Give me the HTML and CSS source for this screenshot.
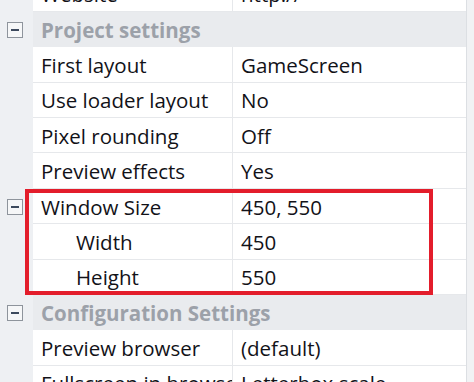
FILE: index.html
```html
<!DOCTYPE html>
<html>

<head>
  <meta charset="utf-8">
  <title>Project properties</title>
  <link rel="stylesheet" href="styles.css">
</head>

<body>
  <div id="panel">
    <div class="grid">

      <div class="row">
        <div class="gutter"></div>
        <div class="name">Website</div>
        <div class="value">http://</div>
      </div>

      <div class="row section">
        <div class="gutter"><span class="toggle"></span></div>
        <div class="title">Project settings</div>
      </div>
      <div class="row">
        <div class="gutter"></div>
        <div class="name">First layout</div>
        <div class="value">GameScreen</div>
      </div>
      <div class="row">
        <div class="gutter"></div>
        <div class="name">Use loader layout</div>
        <div class="value">No</div>
      </div>
      <div class="row">
        <div class="gutter"></div>
        <div class="name">Pixel rounding</div>
        <div class="value">Off</div>
      </div>
      <div class="row">
        <div class="gutter"></div>
        <div class="name">Preview effects</div>
        <div class="value">Yes</div>
      </div>

      <div class="highlight">
        <div class="row">
          <div class="gutter"><span class="toggle"></span></div>
          <div class="name">Window Size</div>
          <div class="value">450, 550</div>
        </div>
        <div class="row">
          <div class="gutter"></div>
          <div class="name sub">Width</div>
          <div class="value">450</div>
        </div>
        <div class="row">
          <div class="gutter"></div>
          <div class="name sub">Height</div>
          <div class="value">550</div>
        </div>
      </div>

      <div class="row section">
        <div class="gutter"><span class="toggle"></span></div>
        <div class="title">Configuration Settings</div>
      </div>
      <div class="row">
        <div class="gutter"></div>
        <div class="name">Preview browser</div>
        <div class="value">(default)</div>
      </div>
      <div class="row">
        <div class="gutter"></div>
        <div class="name">Fullscreen in browser</div>
        <div class="value">Letterbox scale</div>
      </div>

    </div>
    <div class="scrollbar"></div>
  </div>
</body>

</html>
```

FILE: styles.css
```css
body {
  margin: 0;
  font-family: 'Open Sans', 'Noto Sans', sans-serif;
  font-size: 20.5px;
  color: #121218;
  background-color: #eef0f3;
  overflow: hidden;
}

#panel {
  display: flex;
  height: 382px;
}

.grid {
  width: 466px;
  margin-top: -23.5px;
}

.scrollbar {
  flex: 1;
  background-color: #f1f2f4;
  border-left: 1px solid #dcdfe3;
}

/*///////////////////////////////////////////////////////////////////////////*/
.row {
  display: flex;
  height: 35.4px;
  box-sizing: border-box;
}

.gutter {
  width: 33px;
  flex: none;
  display: flex;
  align-items: center;
  justify-content: center;
  padding-right: 3px;
  box-sizing: border-box;
  background-color: #eef0f3;
}

.name,
.value {
  display: flex;
  align-items: center;
  padding-top: 1px;
  background-color: #ffffff;
  border-bottom: 1px solid #e6e8eb;
  white-space: nowrap;
  overflow: hidden;
  box-sizing: border-box;
}

.name {
  width: 200px;
  padding-left: 8px;
  border-right: 1px solid #e6e8eb;
}

.name.sub {
  padding-left: 43px;
}

.value {
  flex: 1;
  padding-left: 8px;
}

.section {
  background-color: #e9ebee;
}

.title {
  display: flex;
  align-items: center;
  padding-left: 8px;
  font-weight: bold;
  color: #9ca1a9;
  white-space: nowrap;
}

.toggle {
  position: relative;
  width: 14px;
  height: 14px;
  border: 1px solid #8e949c;
  background-color: #f6f7f8;
}

.toggle::after {
  content: "";
  position: absolute;
  left: 3px;
  top: 6px;
  width: 8px;
  height: 2px;
  background-color: #3d4a5e;
}

/*///////////////////////////////////////////////////////////////////////////*/
.highlight {
  position: relative;
}

.highlight::after {
  content: "";
  position: absolute;
  left: 25px;
  top: 0;
  width: 408px;
  height: 106px;
  box-sizing: border-box;
  border: 4px solid #e31d2b;
}
```
